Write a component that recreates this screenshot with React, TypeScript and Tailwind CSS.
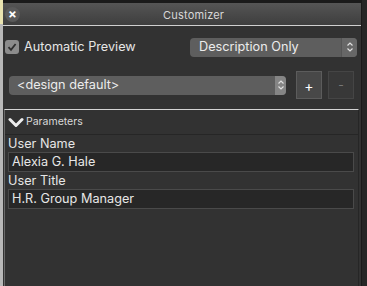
const font = { fontFamily: "Inter, 'Liberation Sans', sans-serif" }

function Stepper({ className }: { className: string }) {
  return (
    <div className={className}>
      <svg width="8" height="12" viewBox="0 0 8 12" fill="none" stroke="#e0e0e0" strokeWidth="1.2">
        <path d="M1.5 4.5 L4 2 L6.5 4.5" />
        <path d="M1.5 7.5 L4 10 L6.5 7.5" />
      </svg>
    </div>
  )
}

export default function App() {
  return (
    <div className="w-[367px] h-[286px] bg-[#161616] flex text-[#e6e6e6]" style={font}>
      <div className="w-[3px] flex flex-col">
        <div className="h-[24px] bg-[#e9e3b0]" />
        <div className="flex-1 bg-[#b8b8b8]" />
      </div>
      <div className="w-[358px] flex flex-col">
        <div className="h-[3px] bg-[#1a1a1a]" />
        {/* title bar */}
        <div className="h-[23px] bg-gradient-to-b from-[#555555] to-[#3e3e3e] border-b border-[#cfcfcf] flex items-center relative">
          <div className="ml-[2px] w-[15px] h-[15px] rounded-full bg-[#5a5a5a] flex items-center justify-center text-white text-[13px] font-bold leading-none">
            ×
          </div>
          <div className="absolute left-[160px] top-[4px] text-[11px] text-[#d8d8d8] tracking-[0.2px]">Customizer</div>
        </div>
        <div className="flex-1 bg-[#323232] flex flex-col">
          {/* row 1 */}
          <div className="flex items-center mt-[11px] h-[20px]">
            <div className="ml-[2px] w-[14px] h-[14px] rounded-[3px] bg-[#8c8c8c] flex items-center justify-center">
              <svg width="10" height="10" viewBox="0 0 10 10" fill="none" stroke="#2e2e2e" strokeWidth="1.8">
                <path d="M1.5 5.2 L4 7.8 L8.6 2" />
              </svg>
            </div>
            <span className="ml-[5px] text-[12.7px]">Automatic Preview</span>
            <div className="ml-auto mr-[4px] w-[167px] h-[19px] rounded-[4px] bg-[#5e5e5e] flex items-center overflow-hidden">
              <span className="ml-[9px] text-[12.7px] text-[#ececec] flex-1">Description Only</span>
              <Stepper className="w-[16px] h-full bg-[#676767] border-l border-[#555] flex items-center justify-center" />
            </div>
          </div>
          {/* row 2 */}
          <div className="flex items-center mt-[14px] h-[28px]">
            <div className="ml-[6px] w-[277px] h-[19px] rounded-[4px] bg-[#5e5e5e] flex items-center overflow-hidden">
              <span className="ml-[8px] text-[12.7px] text-[#ececec] flex-1">&lt;design default&gt;</span>
              <Stepper className="w-[11px] h-full bg-[#858585] flex items-center justify-center" />
            </div>
            <div className="ml-[10px] w-[26px] h-[28px] bg-[#484848] border border-[#5c5c5c] flex items-center justify-center text-[14px] text-white">+</div>
            <div className="ml-[6px] w-[26px] h-[28px] bg-[#383838] border border-[#454545] flex items-center justify-center text-[12px] text-[#777]">-</div>
          </div>
          {/* parameters group */}
          <div className="mt-[10px] ml-[1px] mr-[2px] flex-1 border-t border-l border-r border-t-[#d4d4d4] border-l-[#6a6a6a] border-r-[#262626] flex flex-col">
            <div className="h-[25px] flex items-center border-b border-[#262626]">
              <svg width="16" height="11" viewBox="0 0 16 11" fill="none" stroke="#ececec" strokeWidth="3" strokeLinecap="round" strokeLinejoin="round" className="ml-[3px]">
                <path d="M2 2.5 L8 8.5 L14 2.5" />
              </svg>
              <span className="ml-[2px] text-[10.5px] text-[#dadada]">Parameters</span>
            </div>
            <div className="px-[3px] flex flex-col">
              <div className="h-[17px] flex items-end text-[12.7px] leading-none pb-[1px]">User Name</div>
              <div className="h-[20px] bg-[#272727] border border-[#4a4a4a] flex items-center px-[3px] text-[12.7px] mr-[1px]">Alexia G. Hale</div>
              <div className="h-[17px] flex items-end text-[12.7px] leading-none pb-[1px]">User Title</div>
              <div className="h-[20px] bg-[#272727] border border-[#4a4a4a] flex items-center px-[3px] text-[12.7px] mr-[1px]">H.R. Group Manager</div>
            </div>
          </div>
        </div>
      </div>
      <div className="w-[1px] bg-[#1a1a1a]" />
      <div className="flex-1 bg-[#262626]" />
    </div>
  )
}
